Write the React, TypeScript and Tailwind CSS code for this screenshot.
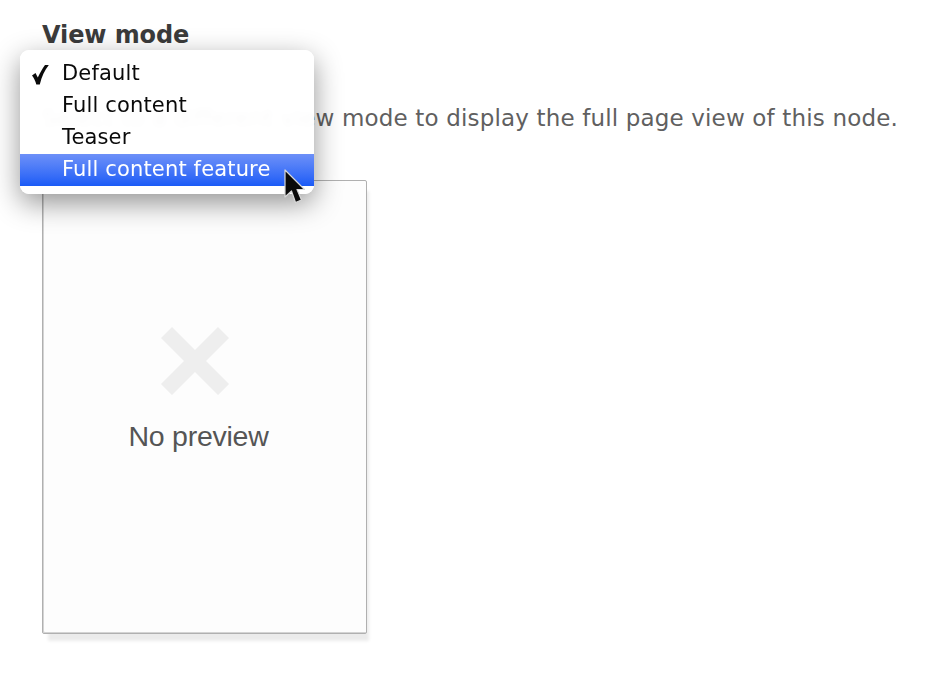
export default function App() {
  return (
    <div className="relative w-[944px] h-[682px] bg-white overflow-hidden font-['DejaVu_Sans',sans-serif]">
      <div className="flex flex-col items-start pl-[42px] pt-[20px]">
        <h1 className="text-[24px] leading-[30px] font-bold text-[#3b3b3b] tracking-[-0.1px]">View mode</h1>
        <div className="mt-[9px] w-[246px] h-[36px] rounded-[5px] border border-[#dfe3ea] bg-[#f7f8fa] flex items-center justify-end pr-[12px]">
          <span className="text-[#b5b5b5] text-[10px] leading-[10px]">↕</span>
        </div>
        <p className="mt-[9px] text-[23px] leading-[28px] text-[#606060] whitespace-nowrap tracking-[0.16px]">Select to a different view mode to display the full page view of this node.</p>
        <div className="mt-[48px] w-[325px] h-[454px] bg-[#fdfdfd] border border-[#b0b0b0] rounded-[2px] shadow-[inset_1px_-1px_0_#d4d4d4,4px_9px_3px_-2px_rgba(0,0,0,0.08)] flex flex-col items-center pt-[144px] pr-[12px]">
          <svg className="mr-[8px]" width="72" height="72" viewBox="0 0 72 72" aria-hidden="true">
            <path d="M2 13 13 2l23 23L59 2l11 11-23 23 23 23-11 11-23-23-23 23L2 59l23-23z" fill="#eeeeee" />
          </svg>
          <span className="mt-[21px] text-[28.5px] leading-[36px] text-[#555555] font-['Liberation_Sans',sans-serif] tracking-[-0.25px]">No preview</span>
        </div>
      </div>

      <div className="absolute left-[20px] top-[50px] w-[294px] h-[144px] rounded-[9px] bg-white/[0.97] backdrop-blur-[3px] shadow-[0_9px_28px_rgba(0,0,0,0.42)] pt-[8px] text-[21px] leading-[30px] text-[#0a0a0a] tracking-[0.15px]">
        <div className="relative pl-[42px] h-[32px]">
          <svg className="absolute left-[11px] top-[6px]" width="18" height="22" viewBox="0 0 18 22" aria-hidden="true">
            <path d="M1 11.500 4.500 9l2.300 4.500C8.800 9 11.500 4.500 14 1H17.800C13.500 6.500 10.800 12.500 8.800 20.500H5.300C4.500 17 3 14 1 11.500z" fill="#0a0a0a" />
          </svg>
          Default
        </div>
        <div className="pl-[42px] h-[32px]">Full content</div>
        <div className="pl-[42px] h-[32px]">Teaser</div>
        <div className="pl-[42px] h-[32px] text-white bg-gradient-to-b from-[#6d90f8] to-[#1a5af6]">Full content feature</div>
      </div>

      <svg className="absolute left-[282px] top-[168px]" width="24" height="38" viewBox="0 0 24 38" aria-hidden="true">
        <path d="M3 2v27l6.500-6 4 11.500 6-2.500-4.500-10.500h7.500z" fill="#0a0a0a" stroke="#d8d8d8" strokeWidth="1.200" strokeLinejoin="round" />
      </svg>
    </div>
  );
}
